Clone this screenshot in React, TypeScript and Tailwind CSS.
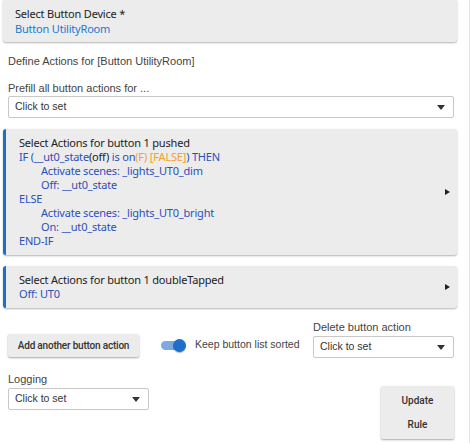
const ubuntu = { fontFamily: '"Noto Sans", "Open Sans", sans-serif', letterSpacing: "-0.2px" };
const roboto = { fontFamily: "Roboto, sans-serif" };

function Caret() {
  return (
    <svg width="8" height="5" viewBox="0 0 8 5" className="shrink-0">
      <path d="M0 0h8L4 5z" fill="#333" />
    </svg>
  );
}

function SelectBox({ className = "" }: { className?: string }) {
  return (
    <div
      className={`flex items-center justify-between h-[22px] border border-[#c8c8c8] rounded-[2px] bg-white pl-[6px] pr-[8px] text-[10.5px] text-[#333] ${className}`}
    >
      <span>Click to set</span>
      <Caret />
    </div>
  );
}

function Panel({ title, children }: { title: string; children: React.ReactNode }) {
  return (
    <div className="flex items-center bg-[#ececec] rounded-[3px] shadow-[0_1px_2px_rgba(0,0,0,0.3)] border-l-[3px] border-[#1e6fc7]">
      <div className="flex-1 pl-[13px] py-[7px] text-[11px] leading-[14px]" style={ubuntu}>
        <div className="text-[#222]">{title}</div>
        {children}
      </div>
      <svg width="5" height="6" viewBox="0 0 5 6" className="mr-[7px]">
        <path d="M0 0l5 3-5 3z" fill="#222" />
      </svg>
    </div>
  );
}

export default function App() {
  return (
    <div
      className="w-[474px] h-[443px] bg-white overflow-hidden flex"
      style={{ fontFamily: '"Liberation Sans", Arial, sans-serif' }}
    >
      <div className="w-[470px] pl-[3px] pr-[12px] border-r border-[#e4e4e4]">
        {/* device panel */}
        <div
          className="bg-[#ececec] rounded-b-[3px] shadow-[0_1px_2px_rgba(0,0,0,0.3)] pl-[12px] pt-[6px] pb-[6px] text-[11px] leading-[15px]"
          style={ubuntu}
        >
          <div className="text-[#222]">Select Button Device *</div>
          <div className="text-[#1a78d0]">Button UtilityRoom</div>
        </div>

        <div className="pl-[5px] mt-[12px] text-[11px] text-[#444] leading-[14px]">
          Define Actions for [Button UtilityRoom]
        </div>

        <div className="pl-[5px] mt-[13px] text-[11px] text-[#444] leading-[14px]">Prefill all button actions for ...</div>
        <div className="pl-[5px] pr-[3px] mt-[1px]">
          <SelectBox />
        </div>

        <div className="mt-[11px]">
          <Panel title="Select Actions for button 1 pushed">
            <div className="text-[#2c4fb8]">
              IF (__ut0_state<span className="text-[#222]">(off)</span> is on
              <span className="text-[#f0a22c]">(F) [FALSE]</span>) THEN
            </div>
            <div className="text-[#2c4fb8] pl-[22px]">Activate scenes: _lights_UT0_dim</div>
            <div className="text-[#2c4fb8] pl-[22px]">Off: __ut0_state</div>
            <div className="text-[#2c4fb8]">ELSE</div>
            <div className="text-[#2c4fb8] pl-[22px]">Activate scenes: _lights_UT0_bright</div>
            <div className="text-[#2c4fb8] pl-[22px]">On: __ut0_state</div>
            <div className="text-[#2c4fb8]">END-IF</div>
          </Panel>
        </div>

        <div className="mt-[11px]">
          <Panel title="Select Actions for button 1 doubleTapped">
            <div className="text-[#2c4fb8]">Off: UT0</div>
          </Panel>
        </div>

        <div className="flex items-end mt-[12px] pl-[5px]">
          <button
            className="h-[23px] w-[131px] mb-[1px] bg-[#ececec] rounded-[2px] shadow-[0_1px_2px_rgba(0,0,0,0.35)] text-[10px] font-medium tracking-[-0.2px] text-[#333]"
            style={roboto}
          >
            Add another button action
          </button>
          <div className="flex items-center ml-[22px] mb-[5px]">
            <div className="relative w-[25px] h-[14px] flex items-center">
              <div className="w-[22px] h-[9px] rounded-full bg-[#7ea9e0]" />
              <div className="absolute right-0 w-[13px] h-[13px] rounded-full bg-[#1e6fc7] shadow-[0_1px_1px_rgba(0,0,0,0.3)]" />
            </div>
            <span className="ml-[9px] text-[10.5px] text-[#444]">Keep button list sorted</span>
          </div>
          <div className="ml-auto mr-[3px]">
            <div className="text-[11px] text-[#444] leading-[14px]">Delete button action</div>
            <SelectBox className="w-[141px] mt-[2px]" />
          </div>
        </div>

        <div className="flex items-start pl-[5px] mt-[14px]">
          <div>
            <div className="text-[11px] text-[#444] leading-[14px]">Logging</div>
            <SelectBox className="w-[141px] mt-[2px]" />
          </div>
          <button
            className="ml-auto mr-[3px] mt-[14px] w-[73px] h-[53px] bg-[#ececec] rounded-[2px] shadow-[0_1px_2px_rgba(0,0,0,0.35)] text-[10px] font-medium text-[#333] leading-[24px]"
            style={roboto}
          >
            Update
            <br />
            Rule
          </button>
        </div>
      </div>
    </div>
  );
}
